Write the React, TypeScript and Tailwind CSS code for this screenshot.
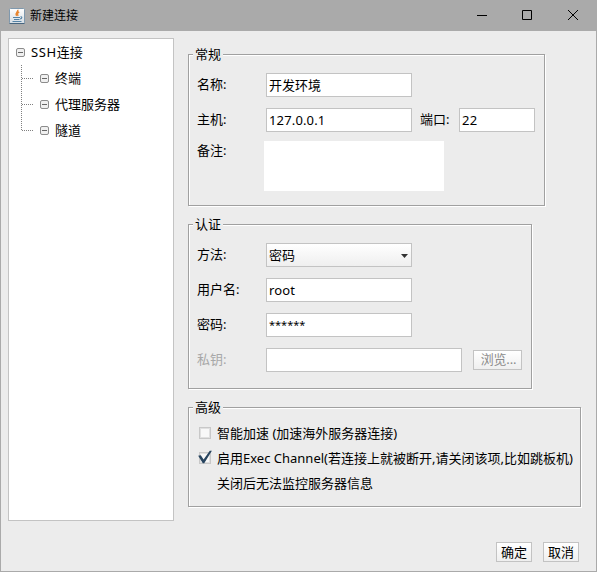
import type { ReactNode } from 'react';

interface GroupProps {
  title: string;
  className: string;
  children: ReactNode;
}

// Etched group box: grey line with a white highlight below and to the right.
function Group({ title, className, children }: GroupProps) {
  return (
    <section
      className={`border border-[#a0a0a0] shadow-[1px_1px_0_#fff,inset_1px_1px_0_#fff] ${className}`}
    >
      <h2 className="-mt-[11px] mb-px ml-1 flex h-5 w-[30px] items-center bg-[#ececec] pl-0.5">{title}</h2>
      {children}
    </section>
  );
}

interface TextBoxProps {
  value?: string;
  width?: string;
  textStyle?: string;
}

function TextBox({ value = '', width = 'w-[146px]', textStyle = '' }: TextBoxProps) {
  return (
    <div className={`flex h-6 shrink-0 items-center border border-[#c3c3c3] bg-white pl-0.5 ${width} ${textStyle}`}>
      {value}
    </div>
  );
}

interface FieldProps extends TextBoxProps {
  label: string;
  disabled?: boolean;
  children?: ReactNode;
}

function Field({ label, value, width, textStyle, disabled, children }: FieldProps) {
  return (
    <div className="flex h-6 items-center">
      <label className={`w-[69px] shrink-0 pb-0.5 ${disabled ? 'text-[#a8a8a8]' : ''}`}>{label}</label>
      <TextBox value={value} width={width} textStyle={textStyle} />
      {children}
    </div>
  );
}

function Button({ label, className }: { label: string; className: string }) {
  return (
    <button
      className={`flex h-5 items-center justify-center border border-[#c3c3c3] bg-linear-to-b from-white to-[#efefef] ${className}`}
    >
      {label}
    </button>
  );
}

function Toggle() {
  return (
    <svg width="9" height="9" viewBox="0 0 9 9" className="shrink-0" fill="none">
      <rect x="0.5" y="0.5" width="8" height="8" rx="1.5" fill="#f0f0f0" stroke="#8c8c8c" />
      <path d="M2 4.5h5" stroke="#666" />
    </svg>
  );
}

function CheckBox({ checked }: { checked?: boolean }) {
  return (
    <svg width="14" height="16" viewBox="0 0 14 16" className="shrink-0" fill="none">
      <rect x="1.5" y="2.5" width="11" height="11" fill="#f8f8f8" stroke="#c8c8c8" />
      <rect x="2.5" y="3.5" width="9" height="9" stroke="#e0e0e0" />
      {checked && <path d="M.2 5.8 2.8 5.2 5.6 9.6 11.8.8 13.9.8 6.2 13.2 4.8 13.2Z" fill="#27445f" />}
    </svg>
  );
}

function JavaIcon() {
  return (
    <svg width="16" height="16" viewBox="0 0 16 16" fill="none">
      <defs>
        <linearGradient id="tile" x1="0" y1="0" x2="0" y2="1">
          <stop stopColor="#fff" />
          <stop offset="1" stopColor="#d5dde4" />
        </linearGradient>
      </defs>
      <rect x="0.5" y="0.5" width="15" height="15" rx="1" fill="url(#tile)" stroke="#7f98ad" />
      <path d="M.5 15.5h15" stroke="#47657f" />
      <path d="M8.8 1.8C9.6 4 5.6 4.4 7.6 7.8M10.2 3.8C8 5 8.2 6.4 9.2 7.8" stroke="#e8852f" strokeWidth="1.4" />
      <path d="M4 9.5h7M5 11.5h5.5M3.5 13.5h9M11.5 8.8c2-.4 1.6 1.7-.4 2.2" stroke="#5482a5" strokeWidth="1.1" />
    </svg>
  );
}

const treeItems = ['终端', '代理服务器', '隧道'];

export default function App() {
  return (
    <div className="flex h-[572px] w-[597px] flex-col border border-t-0 border-[#aaa] bg-[#ececec] font-['Noto_Sans','Noto_Sans_CJK_SC',sans-serif] text-[13px] leading-5 whitespace-nowrap text-black">
      <header className="flex h-[31px] shrink-0 items-center bg-[#aaa] pl-2">
        <JavaIcon />
        <h1 className="ml-[5px] text-xs">新建连接</h1>
        <svg width="120" height="31" viewBox="0 0 120 31" className="ml-auto" fill="none" stroke="#000">
          <path d="M1 15.5h10M46.5 10.5h9v9h-9z" />
          <path d="M92 10l10 10M102 10l-10 10" />
        </svg>
      </header>

      <main className="flex pt-[7px] pl-[7px]">
        <aside className="h-[483px] w-[166px] shrink-0 border border-[#c3c3c3] bg-white">
          <div className="flex h-[26px] items-center pl-[7px]">
            <Toggle />
            <span className="ml-1.5 tracking-[0.6px]">SSH</span>
            连接
          </div>
          <ul className="ml-3">
            {treeItems.map((item, i) => (
              <li key={item} className="flex h-[26px] items-center">
                <span className="h-[26px] w-[19px] shrink-0">
                  <svg width="14" height="26" viewBox="0 0 14 26" stroke="#808080" strokeDasharray="1 1">
                    <path d={i === treeItems.length - 1 ? 'M.5 0v13M1 13.5h12' : 'M.5 0v26M1 13.5h12'} />
                  </svg>
                </span>
                <Toggle />
                <span className="ml-1.5">{item}</span>
              </li>
            ))}
          </ul>
        </aside>

        <div className="ml-3.5 flex flex-col pt-4">
          <Group title="常规" className="h-[152px] w-[357px]">
            <div className="flex flex-col gap-[11px] pt-2 pl-2">
              <Field label="名称:" value="开发环境" />
              <Field label="主机:" value="127.0.0.1" textStyle="tracking-[0.15px]">
                <label className="ml-2 w-[39px] pb-0.5">端口:</label>
                <TextBox value="22" width="w-[76px]" textStyle="tracking-[0.3px]" />
              </Field>
            </div>
            <div className="mt-[9px] flex pl-2">
              <label className="-mt-px w-[67px]">备注:</label>
              <div className="h-[50px] w-[180px] bg-white" />
            </div>
          </Group>

          <Group title="认证" className="mt-[18px] h-[165px] w-[344px]">
            <div className="flex flex-col gap-[11px] pt-2 pl-2">
              <div className="flex h-6 items-center">
                <label className="w-[69px] pb-0.5">方法:</label>
                <div className="flex h-6 w-[146px] items-center justify-between border border-[#c3c3c3] bg-linear-to-b from-white to-[#efefef] pr-[3px] pl-0.5">
                  密码
                  <svg width="7" height="4" viewBox="0 0 7 4" className="mt-px">
                    <path d="M0 0h7L3.5 4z" fill="#333" />
                  </svg>
                </div>
              </div>
              <Field label="用户名:" value="root" textStyle="tracking-[0.1px]" />
              <Field label="密码:" value="******" textStyle="text-[11px]" />
              <Field label="私钥:" width="w-[196px]" disabled>
                <Button label="浏览..." className="ml-[11px] w-[49px] pb-0.5 pl-0.5 tracking-[-0.2px] text-[#8c8c8c]" />
              </Field>
            </div>
          </Group>

          <Group title="高级" className="mt-[18px] h-[100px] w-[393px]">
            <div className="flex flex-col gap-[5px] pt-[5px] pl-[9px]">
              <label className="flex h-5 items-center gap-[5px]">
                <CheckBox />
                智能加速 (加速海外服务器连接)
              </label>
              <label className="flex h-5 items-center gap-[5px]">
                <CheckBox checked />
                启用Exec Channel(若连接上就被断开,请关闭该项,比如跳板机)
              </label>
              <p className="h-5 pl-[19px]">关闭后无法监控服务器信息</p>
            </div>
          </Group>
        </div>
      </main>

      <footer className="mt-[21px] flex justify-end gap-[11px] pr-[17px]">
        <Button label="确定" className="w-9" />
        <Button label="取消" className="w-9" />
      </footer>
    </div>
  );
}
